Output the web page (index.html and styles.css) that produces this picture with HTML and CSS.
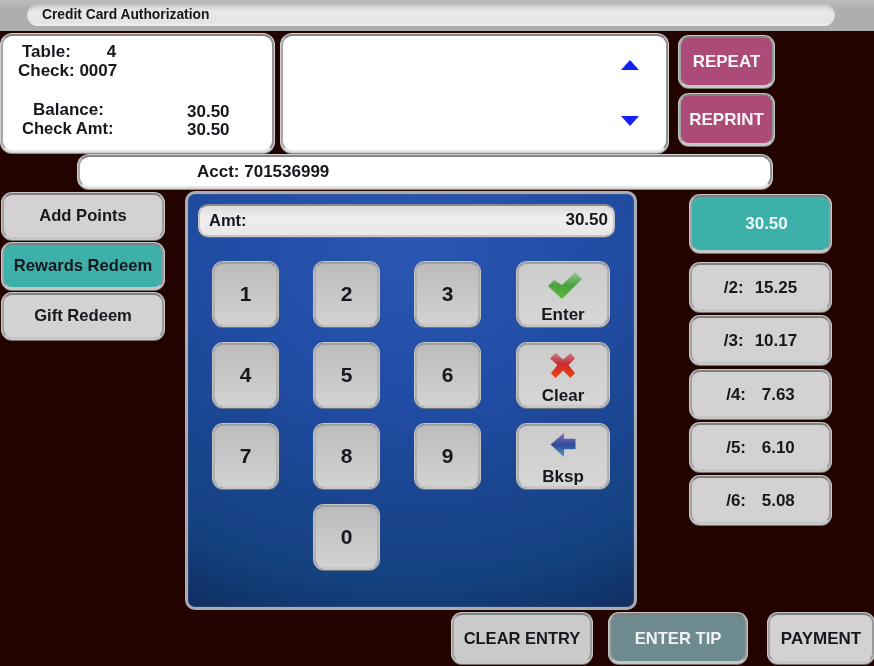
FILE: index.html
```html
<!DOCTYPE html>
<html lang="en">
<head>
<meta charset="utf-8">
<title>Credit Card Authorization</title>
<link rel="stylesheet" href="styles.css">
</head>
<body>
<div class="app">
  <header class="titlebar"><div class="title-pill">Credit Card Authorization</div></header>

  <section class="top-row">
    <div class="panel info">
      <div class="info-line line-table"><span class="l-table">Table:</span><span class="v-table">4</span></div>
      <div class="info-line line-check">Check: 0007</div>
      <div class="info-line line-balance"><span class="l-balance">Balance:</span><span class="amt">30.50</span></div>
      <div class="info-line line-checkamt"><span class="l-checkamt">Check Amt:</span><span class="amt">30.50</span></div>
    </div>
    <div class="panel list">
      <svg class="arrow" width="18" height="10" viewBox="0 0 18 10"><path d="M9 0 L18 10 H0 Z" fill="#1420f5"/></svg>
      <svg class="arrow" width="18" height="10" viewBox="0 0 18 10"><path d="M0 0 H18 L9 10 Z" fill="#1420f5"/></svg>
    </div>
    <div class="action-col">
      <button class="btn pink action">REPEAT</button>
      <button class="btn pink action">REPRINT</button>
    </div>
  </section>

  <div class="panel acct"><span>Acct: 701536999</span></div>

  <main class="main">
    <nav class="left-col">
      <button class="btn side">Add Points</button>
      <button class="btn side teal">Rewards Redeem</button>
      <button class="btn side">Gift Redeem</button>
    </nav>

    <section class="keypad">
      <div class="amt-bar"><span class="amt-label">Amt:</span><span>30.50</span></div>
      <div class="keys">
        <button class="btn key">1</button>
        <button class="btn key">2</button>
        <button class="btn key">3</button>
        <button class="btn key fn">
          <svg class="ico-check" width="35" height="27" viewBox="0 0 35 27"><defs><linearGradient id="g" x1="0" y1="0" x2="0" y2="1"><stop offset="0" stop-color="#9cc49a"/><stop offset=".5" stop-color="#4aa040"/><stop offset="1" stop-color="#55c030"/></linearGradient></defs><path d="M0 14 L6 8 L14 13 L27 0 L34 7 L14 27 Z" fill="url(#g)"/></svg>
          <span>Enter</span>
        </button>
        <button class="btn key">4</button>
        <button class="btn key">5</button>
        <button class="btn key">6</button>
        <button class="btn key fn">
          <svg class="ico-clear" width="28" height="27" viewBox="0 0 28 27"><defs><linearGradient id="r" x1="0" y1="0" x2="0" y2="1"><stop offset="0" stop-color="#c08088"/><stop offset=".45" stop-color="#c92a30"/><stop offset="1" stop-color="#f2420c"/></linearGradient></defs><path d="M0 6 L6 0 L14 7 L22 0 L27 6 L20 13 L27 22 L22 27 L14 19 L6 27 L1 22 L8 13 Z" fill="url(#r)"/></svg>
          <span>Clear</span>
        </button>
        <button class="btn key">7</button>
        <button class="btn key">8</button>
        <button class="btn key">9</button>
        <button class="btn key fn">
          <svg class="ico-back" width="27" height="26" viewBox="0 0 27 26"><defs><linearGradient id="b" x1="0" y1="0" x2="0" y2="1"><stop offset="0" stop-color="#8278bc"/><stop offset=".5" stop-color="#2f4a98"/><stop offset="1" stop-color="#4aa0c8"/></linearGradient></defs><path d="M0 12 L14 0 L14 6 L26 6 L26 17 L14 17 L14 25 Z" fill="url(#b)"/></svg>
          <span>Bksp</span>
        </button>
        <button class="btn key zero">0</button>
      </div>
    </section>

    <aside class="right-col">
      <button class="btn split teal-big">30.50</button>
      <button class="btn split"><span class="div">/2:</span><span>15.25</span></button>
      <button class="btn split"><span class="div">/3:</span><span>10.17</span></button>
      <button class="btn split"><span class="div">/4:</span><span>&nbsp;7.63</span></button>
      <button class="btn split"><span class="div">/5:</span><span>&nbsp;6.10</span></button>
      <button class="btn split"><span class="div">/6:</span><span>&nbsp;5.08</span></button>
    </aside>
  </main>

  <footer class="bottom">
    <button class="btn foot clear">CLEAR ENTRY</button>
    <button class="btn foot tip">ENTER TIP</button>
    <button class="btn foot pay">PAYMENT</button>
  </footer>
</div>
</body>
</html>
```
FILE: styles.css
```css
* { box-sizing: border-box; }
html, body { margin: 0; padding: 0; }
body {
  width: 874px;
  height: 666px;
  overflow: hidden;
  background: #220300;
  font-family: "Liberation Sans", Arial, sans-serif;
  font-weight: bold;
  color: #15181c;
}
.app { display: flex; flex-direction: column; width: 874px; height: 666px; filter: blur(0.35px); }

.titlebar {
  height: 31px;
  padding: 4px 39px 5px 27px;
  background: linear-gradient(#bcbcbc, #adadad 30%, #adadad);
}
.title-pill {
  height: 22px;
  padding: 0 15px;
  border-radius: 11px;
  background: linear-gradient(#d0d0d0, #e9e9e9 35%, #e4e4e4 85%, #f2f2f2);
  box-shadow: inset 0 2px 2px #c4c4c4;
  font-size: 13.8px;
  line-height: 21px;
}

.panel {
  background: #fff;
  border-radius: 11px;
  border: 2px solid #a0a0a0;
  border-top-color: #848484;
  border-left-color: #a8a8a8;
  border-right-color: #929292;
  border-bottom-color: #e6e6e6;
  box-shadow: 0 0 0 1px #d0d0d0, 0 1px 0 1px #8a8a8a;
}

.top-row { display: flex; height: 118px; margin-top: 3px; padding-left: 1px; }
.info { width: 273px; font-size: 17px; line-height: 19px; padding: 6px 0 0 1px; }
.info-line { display: flex; height: 19px; white-space: nowrap; }
.line-table { padding-left: 18px; }
.v-table { margin-left: 36px; }
.line-check { padding-left: 14px; }
.line-balance { padding-left: 29px; margin-top: 20px; }
.line-checkamt { padding-left: 18px; }
.line-balance .amt { margin-top: 2px; }
.line-checkamt .amt { margin-top: 1px; }
.l-balance { width: 154px; }
.l-checkamt { width: 165px; font-size: 16.6px; }

.list {
  width: 387px;
  margin-left: 7px;
  display: flex;
  flex-direction: column;
  justify-content: space-between;
  align-items: flex-end;
  padding: 24px 27px 24px 0;
}
.arrow { display: block; }

.action-col { display: flex; flex-direction: column; gap: 7px; margin-left: 11px; padding-top: 2px; }

.btn {
  display: block;
  margin: 0;
  padding: 0;
  font-family: inherit;
  font-weight: bold;
  color: #15181c;
  background: #d3d1d1;
  border-radius: 10px;
  border: 2px solid #9c9c9c;
  border-top-color: #7e8080;
  border-left-color: #a2a2a2;
  border-right-color: #9a9a9a;
  border-bottom-color: #c6c6c6;
  box-shadow: 0 0 0 1px #c8c8c8, 0 1px 0 1px #737373;
}
.pink { background: #ac4a78; color: #f5f5f5; }
.action { width: 95px; height: 51px; font-size: 17px; }

.acct {
  width: 694px;
  height: 33px;
  margin: 3px 0 0 78px;
  padding-left: 117px;
  font-size: 17px;
  line-height: 29px;
}

.main { display: flex; height: 419px; margin-top: 3px; padding-left: 2px; }
.left-col { display: flex; flex-direction: column; gap: 4px; width: 162px; margin-top: 2px; }
.side { width: 162px; height: 46px; font-size: 16.6px; }
.teal { background: #3eb0aa; }

.keypad {
  width: 452px;
  height: 419px;
  margin-left: 21px;
  padding: 10px;
  border-radius: 10px;
  border: 3px solid #a9adb3;
  box-shadow: inset 0 0 2px #5a6a80;
  background: radial-gradient(ellipse 110% 100% at 50% 12%, #2b57b2 0%, #214ca4 40%, #1a4590 62%, #14417f 82%, #0f2d5f 100%);
}
.amt-bar {
  display: flex;
  justify-content: space-between;
  width: 417px;
  height: 33px;
  padding: 0 5px 0 9px;
  border-radius: 10px;
  border: 2px solid #c4c4c4;
  border-top-color: #8c8c8c;
  box-shadow: 0 1px 0 #666;
  background: linear-gradient(#dcdcdc, #eeeeee 40%, #e8e8e8);
  font-size: 17px;
  line-height: 28px;
}
.amt-label { font-size: 16.5px; }
.keys {
  display: grid;
  grid-template-columns: 65px 65px 65px 93px;
  grid-auto-rows: 64px;
  column-gap: 36px;
  row-gap: 17px;
  margin: 25px 0 0 15px;
}
.key {
  width: 100%;
  height: 100%;
  font-size: 21px;
  background: linear-gradient(#bcbcbc, #d2d2d2);
  border-color: #a0a0a0 #b2b2b2 #c8c8c8 #b2b2b2;
  box-shadow: 0 0 0 1px #c4c4c4, 0 1px 0 1px #6e7480;
}
.fn {
  display: flex;
  flex-direction: column;
  align-items: center;
  justify-content: flex-start;
  width: 92px;
  margin-left: 1px;
  font-size: 17px;
  padding-top: 8px;
  line-height: 18px;
  background: linear-gradient(#cccccc, #d6d6d6);
}
.fn svg { display: block; margin-bottom: 7px; }
.fn .ico-check { transform: translateX(2px); }
.fn .ico-clear { margin-bottom: 9px; }
.fn .ico-back { margin-bottom: 9px; transform: translateY(-1px); }
.zero { grid-column: 2; }

.right-col { display: flex; flex-direction: column; width: 141px; margin-left: 53px; padding-top: 4px; }
.split {
  display: flex;
  width: 141px;
  align-items: center;
  justify-content: center;
  font-size: 17px;
  height: 48px;
  padding-top: 2px;
  margin-bottom: 5.33px;
}
.split .div { margin-right: 11px; }
.teal-big { height: 57px; padding: 0 0 0 12px; background: #3eb0aa; color: #eef6f5; margin-bottom: 11px; }

.bottom { display: flex; height: 50px; margin-top: 3px; padding-left: 452px; }
.foot { height: 50px; font-size: 17px; padding-top: 1px; }
.clear { width: 140px; background: #cacaca; font-size: 16.5px; }
.tip { width: 138px; margin-left: 17px; background: #6d8b8f; color: #f2f2f2; font-size: 16.6px; }
.pay { width: 106px; margin-left: 21px; background: #d3d1d1; }
```
